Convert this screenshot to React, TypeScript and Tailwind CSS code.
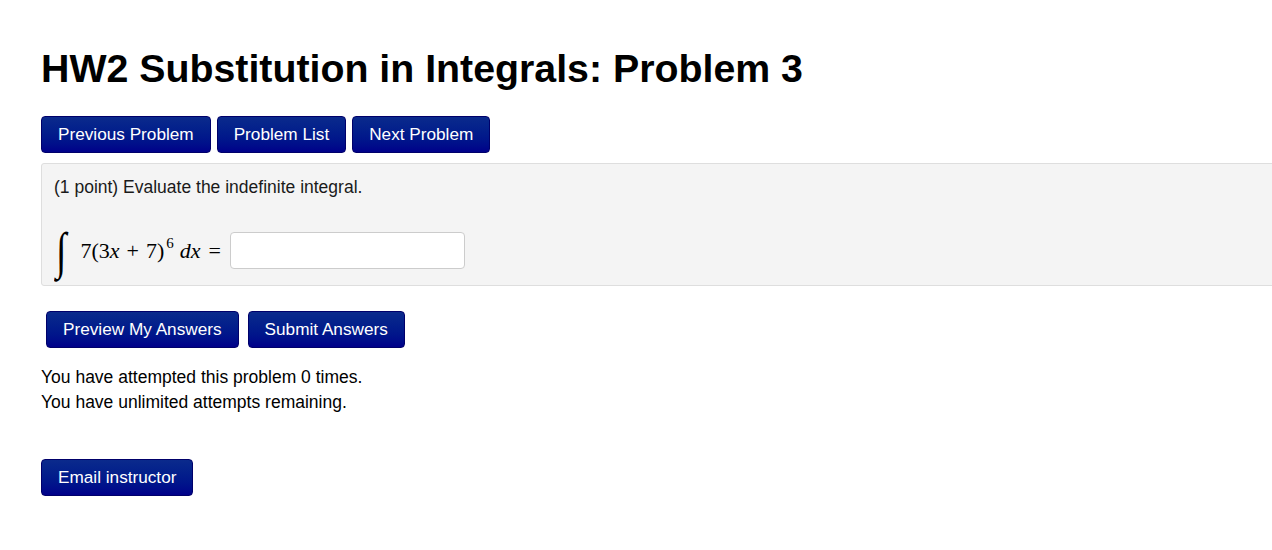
import React from "react"

const btn =
  "h-[37px] px-4 rounded-[4px] text-white text-[17.2px] bg-gradient-to-b from-[#0b2a8c] to-[#00008a] border border-[#00006a] leading-none"

export default function App() {
  return (
    <div className="min-h-[550px] bg-white pl-[41px] pt-[45px] text-[#1a1a1a] font-['Liberation_Sans',Arial,sans-serif]">
      <h1 className="text-[39.3px] font-bold leading-[46px] text-black">
        HW2 Substitution in Integrals: Problem 3
      </h1>

      <div className="mt-[25px] flex gap-[6px]">
        <button className={btn}>Previous Problem</button>
        <button className={btn}>Problem List</button>
        <button className={btn}>Next Problem</button>
      </div>

      <div className="mt-[10px] -mr-4 h-[123px] bg-[#f4f4f4] border border-[#dedede] rounded-[3px] pl-3 pt-[12px]">
        <p className="text-[17.5px] leading-[22px]">(1 point) Evaluate the indefinite integral.</p>
        <div className="mt-[34px] flex items-center">
          <div className="flex items-center font-['Liberation_Serif',serif] text-[22px] text-black">
            <span className="italic text-[38px] leading-none ml-[2px] mr-[14px] scale-y-[1.35] -mt-[2px]">∫</span>
            <span>7(3</span>
            <span className="italic">x</span>
            <span className="mx-[7px]">+</span>
            <span>7)</span>
            <span className="text-[15px] -mt-[14px] ml-[2px]">6</span>
            <span className="italic ml-[6px]">dx</span>
            <span className="ml-[8px]">=</span>
          </div>
          <input
            type="text"
            className="ml-[9px] w-[235px] h-[37px] bg-white border border-[#cccccc] rounded-[4px]"
          />
        </div>
      </div>

      <div className="mt-[25px] ml-[5px] flex gap-[9px]">
        <button className={btn}>Preview My Answers</button>
        <button className={btn}>Submit Answers</button>
      </div>

      <div className="mt-[17px] text-[17.5px] leading-[25px] text-black">
        <div>You have attempted this problem 0 times.</div>
        <div>You have unlimited attempts remaining.</div>
      </div>

      <div className="mt-[44px]">
        <button className={btn}>Email instructor</button>
      </div>
    </div>
  )
}
